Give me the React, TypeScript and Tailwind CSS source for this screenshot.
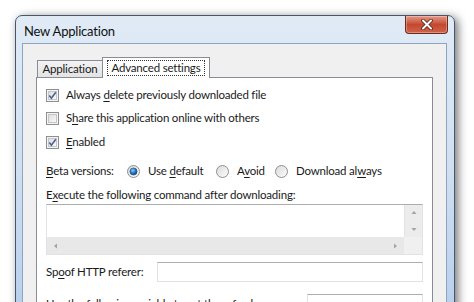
import React from "react";

function Check({ checked }: { checked: boolean }) {
  return (
    <svg width="13" height="13" viewBox="0 0 13 13" className="shrink-0">
      <defs>
        <linearGradient id="cbg" x1="0" y1="0" x2="1" y2="1">
          <stop offset="0" stopColor="#dcdcdc" />
          <stop offset="1" stopColor="#fbfbfb" />
        </linearGradient>
      </defs>
      <rect x="0.5" y="0.5" width="12" height="12" fill="#f4f4f4" stroke="#8e8f8f" />
      <rect x="2.5" y="2.5" width="8" height="8" fill="url(#cbg)" stroke="#c6c6c6" />
      {checked && (
        <path d="M3.3 6.4 L5.4 9.2 L9.8 3.2" fill="none" stroke="#4a5f97" strokeWidth="1.6" />
      )}
    </svg>
  );
}

function Radio({ checked }: { checked: boolean }) {
  return (
    <svg width="13" height="13" viewBox="0 0 13 13" className="shrink-0">
      <defs>
        <linearGradient id="rbg" x1="0" y1="0" x2="1" y2="1">
          <stop offset="0" stopColor="#d8d8d8" />
          <stop offset="1" stopColor="#ffffff" />
        </linearGradient>
        <radialGradient id="rdot" cx="0.4" cy="0.35" r="0.7">
          <stop offset="0" stopColor="#8fd0ff" />
          <stop offset="0.5" stopColor="#2a7cc4" />
          <stop offset="1" stopColor="#0b3e6e" />
        </radialGradient>
      </defs>
      <circle cx="6.5" cy="6.5" r="6" fill="url(#rbg)" stroke="#8e8f8f" />
      {checked && <circle cx="6.5" cy="6.5" r="3.6" fill="url(#rdot)" stroke="#1d4f7f" strokeWidth="0.6" />}
    </svg>
  );
}

function Arrow({ dir }: { dir: "up" | "down" | "left" | "right" }) {
  const paths: Record<string, string> = {
    up: "M1.5 5 L4 2 L6.5 5 Z",
    down: "M1.5 3 L4 6 L6.5 3 Z",
    left: "M5 1.5 L2 4 L5 6.5 Z",
    right: "M3 1.5 L6 4 L3 6.5 Z",
  };
  return (
    <svg width="8" height="8" viewBox="0 0 8 8">
      <path d={paths[dir]} fill="#a3a3a3" />
    </svg>
  );
}

function U({ children }: { children: React.ReactNode }) {
  return <span className="underline underline-offset-[2px] decoration-1">{children}</span>;
}

export default function App() {
  return (
    <div className="w-[474px] h-[302px] overflow-hidden bg-white pl-[15px] pt-[15px] [font-family:'Lato',sans-serif] text-[11.5px] tracking-[-0.2px] leading-[16px] text-[#1a1a1a] whitespace-nowrap">
      <div className="relative w-[440px] h-[320px] rounded-t-[7px] border border-[#46566b] bg-gradient-to-b from-[#e0ebf6] via-[#cfdff1] to-[#b4cdec] shadow-[3px_2px_10px_rgba(0,0,0,0.55)] flex flex-col">
        <div className="h-[27px] shrink-0 flex items-center pl-[8px] pt-[2px]">
          <span className="text-[13px] text-[#111]">New Application</span>
        </div>
        <div className="absolute right-[6px] top-[0px] w-[43px] h-[18px] rounded-b-[4px] border border-t-0 border-[#6d2a1c] bg-gradient-to-b from-[#e39a88] via-[#c4472f] to-[#d0644c] flex items-center justify-center shadow-[inset_0_0_0_1px_rgba(255,255,255,0.3)]">
          <svg width="14" height="11" viewBox="0 0 14 11">
            <path d="M3 1.5 L11 9.5 M11 1.5 L3 9.5" stroke="#5a2015" strokeWidth="3.6" strokeLinecap="round" />
            <path d="M3 1.5 L11 9.5 M11 1.5 L3 9.5" stroke="#ffffff" strokeWidth="2" strokeLinecap="round" />
          </svg>
        </div>
        <div className="ml-[6px] mr-[7px] flex-1 bg-[#f0f0f0] border border-[#8fa3bf] pt-[13px] pl-[13px] pr-[13px]">
          <div className="flex items-end h-[20px] pl-[1px]">
            <div className="h-[17px] w-[66px] border border-b-0 border-[#898c95] bg-gradient-to-b from-[#f3f3f3] to-[#e3e3e3] flex items-center justify-center">
              Application
            </div>
            <div className="relative z-10 -mb-px h-[21px] w-[108px] -ml-px border border-b-0 border-[#898c95] bg-white flex items-start justify-center pt-[2px]">
              <span className="border border-dotted border-[#333] px-[4px] leading-[14px]">Advanced settings</span>
            </div>
          </div>
          <div className="h-[300px] border border-[#898c95] bg-white pl-[9px] pr-[9px] pt-[8px] flex flex-col">
            <div className="h-[18px] flex items-center gap-[7px]">
              <Check checked />
              <span>Always <U>d</U>elete previously downloaded file</span>
            </div>
            <div className="mt-[5px] h-[18px] flex items-center gap-[7px]">
              <Check checked={false} />
              <span>S<U>h</U>are this application online with others</span>
            </div>
            <div className="mt-[6px] h-[18px] flex items-center gap-[7px]">
              <Check checked />
              <span><U>E</U>nabled</span>
            </div>
            <div className="mt-[11px] h-[18px] flex items-center">
              <span className="w-[81px] shrink-0"><U>B</U>eta versions:</span>
              <div className="w-[89px] shrink-0 flex items-center gap-[8px]">
                <Radio checked />
                <span>Use <U>d</U>efault</span>
              </div>
              <div className="w-[59px] shrink-0 flex items-center gap-[8px]">
                <Radio checked={false} />
                <span>A<U>v</U>oid</span>
              </div>
              <div className="flex items-center gap-[8px]">
                <Radio checked={false} />
                <span>Download al<U>w</U>ays</span>
              </div>
            </div>
            <div className="mt-[6px] h-[18px] flex items-center">
              <span>E<U>x</U>ecute the following command after downloading:</span>
            </div>
            <div className="h-[51px] border border-[#dfe3e8] border-t-[#abadb3] bg-white grid grid-cols-[1fr_18px] grid-rows-[1fr_17px]">
              <div />
              <div className="bg-[#ececec] flex flex-col items-center justify-between py-[4px] border-l border-[#e3e3e3]">
                <Arrow dir="up" />
                <Arrow dir="down" />
              </div>
              <div className="bg-[#e8e8e8] flex items-center justify-between px-[5px]">
                <Arrow dir="left" />
                <Arrow dir="right" />
              </div>
              <div className="bg-[#f0f0f0]" />
            </div>
            <div className="mt-[7px] h-[20px] flex items-center">
              <span className="w-[111px] shrink-0">Sp<U>o</U>of HTTP referer:</span>
              <div className="flex-1 h-[20px] border border-[#dfe3e8] border-t-[#abadb3] bg-white" />
            </div>
            <div className="mt-[12px] h-[20px] flex items-start">
              <span className="w-[261px] shrink-0 pt-[2px]">Use the following variable to set the refresh:</span>
              <div className="flex-1 h-[20px] border border-[#dfe3e8] border-t-[#abadb3] bg-white" />
            </div>
          </div>
        </div>
      </div>
    </div>
  );
}
